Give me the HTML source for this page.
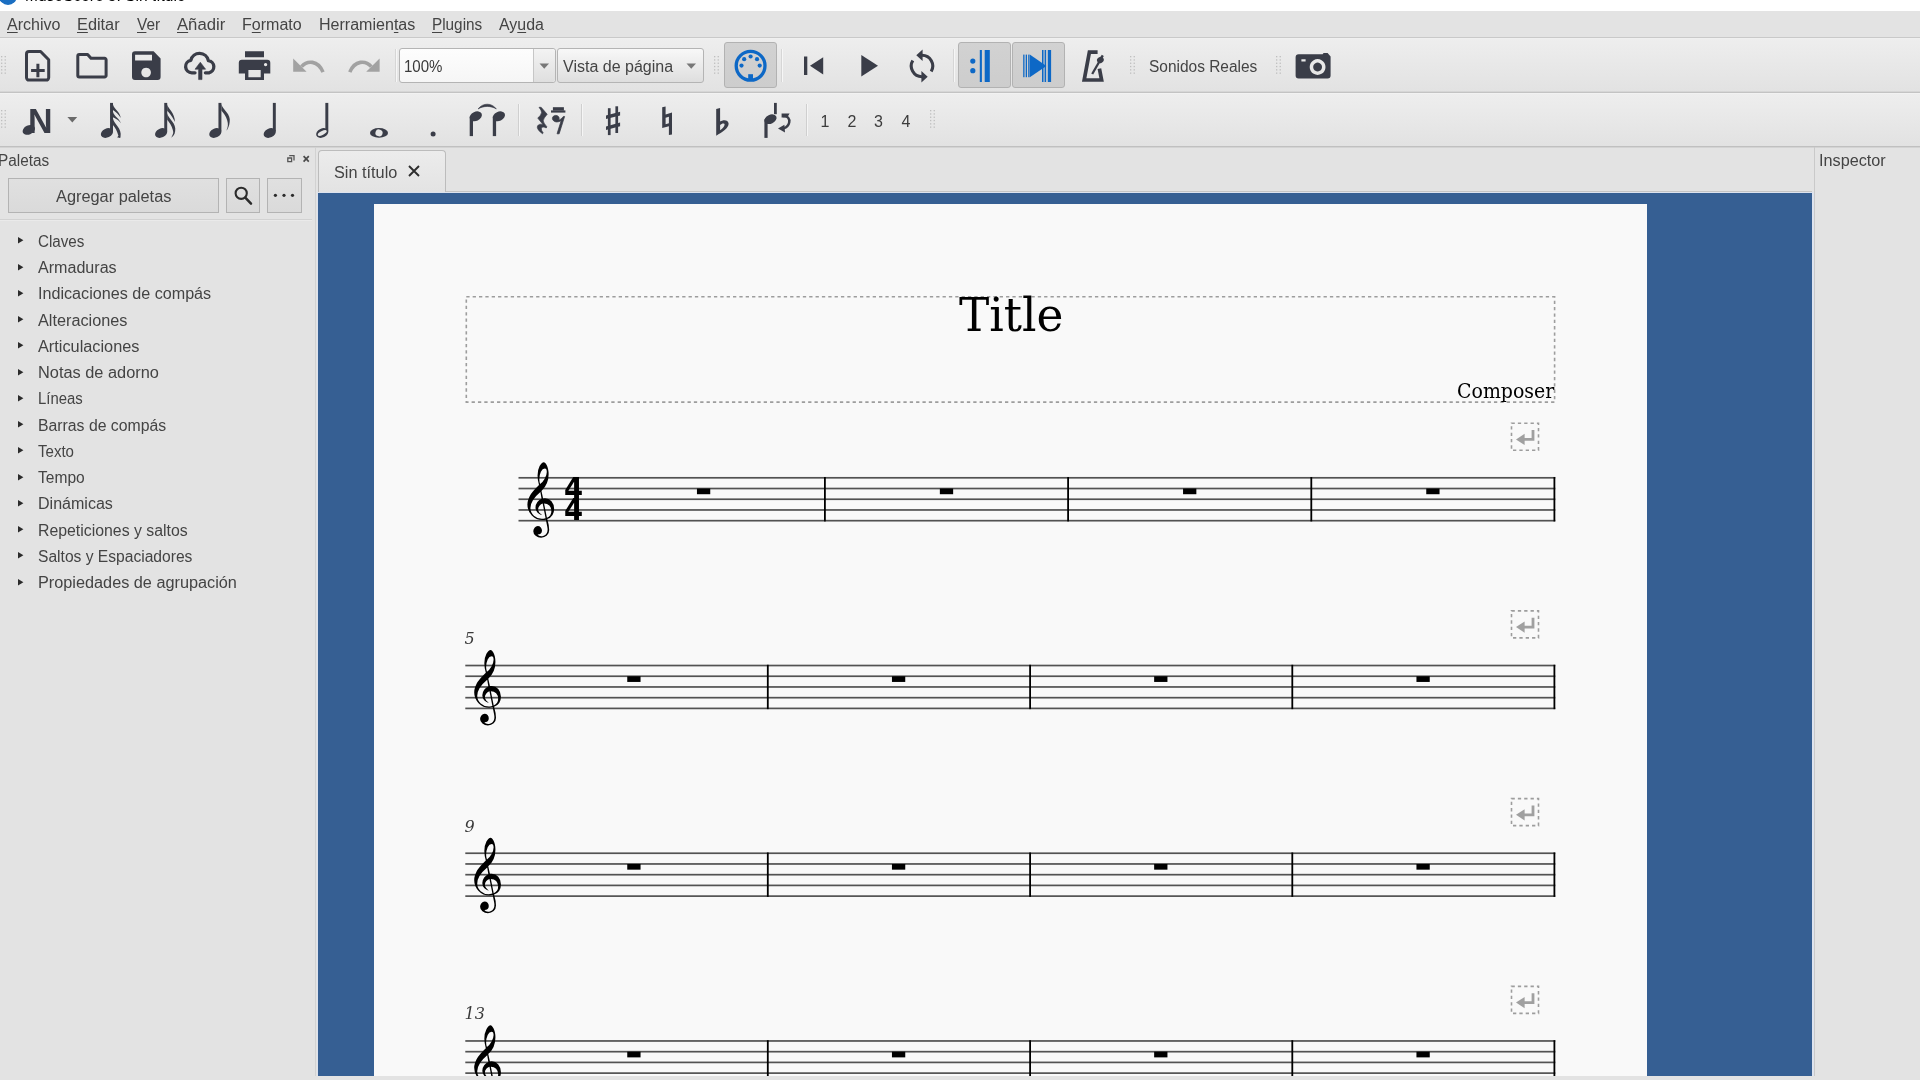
<!DOCTYPE html>
<html lang="es"><head><meta charset="utf-8"><title>MuseScore 3: Sin título</title>
<style>
html,body{margin:0;padding:0;width:1920px;height:1080px;overflow:hidden;background:#e3e3e3}
#r{position:relative;width:1920px;height:1080px;overflow:hidden;will-change:transform}
#r div,#r svg{position:absolute;display:block}
#r div.t{white-space:nowrap}
#r u{text-decoration:underline;text-underline-offset:2.2px;text-decoration-thickness:1.4px}
</style></head>
<body><div id="r">
<div style="left:0px;top:0px;width:1920px;height:1080px;background:#e3e3e3"></div>
<div style="left:0px;top:0px;width:1920px;height:11px;background:#ffffff"></div>
<div style="left:-1px;top:-13px;width:18px;height:18px;border-radius:50%;background:#1b6fc2"></div>
<div class="t" style="left:24.6px;top:-14.44px;font-family:'Liberation Sans',sans-serif;font-size:16px;line-height:20px;color:#000;transform-origin:0 0;transform:scale(0.9703,1);">MuseScore 3: Sin título</div>
<div style="left:0px;top:11px;width:1920px;height:26px;background:#e3e3e3"></div>
<div style="left:0px;top:37px;width:1920px;height:1px;background:#c9c9c9"></div>
<div class="t" style="left:6.8px;top:15.26px;font-family:'Liberation Sans',sans-serif;font-size:16px;line-height:20px;color:#444444;transform-origin:0 0;transform:scale(1.0028,1);"><u>A</u>rchivo</div>
<div class="t" style="left:77.0px;top:15.26px;font-family:'Liberation Sans',sans-serif;font-size:16px;line-height:20px;color:#444444;transform-origin:0 0;transform:scale(1.0192,1);"><u>E</u>ditar</div>
<div class="t" style="left:136.6px;top:15.26px;font-family:'Liberation Sans',sans-serif;font-size:16px;line-height:20px;color:#444444;transform-origin:0 0;transform:scale(0.9599,1);"><u>V</u>er</div>
<div class="t" style="left:176.7px;top:15.26px;font-family:'Liberation Sans',sans-serif;font-size:16px;line-height:20px;color:#444444;transform-origin:0 0;transform:scale(1.0422,1);"><u>A</u>ñadir</div>
<div class="t" style="left:242.4px;top:15.26px;font-family:'Liberation Sans',sans-serif;font-size:16px;line-height:20px;color:#444444;transform-origin:0 0;transform:scale(1.0022,1);">F<u>o</u>rmato</div>
<div class="t" style="left:319.2px;top:15.26px;font-family:'Liberation Sans',sans-serif;font-size:16px;line-height:20px;color:#444444;transform-origin:0 0;transform:scale(1.0028,1);">Herramien<u>t</u>as</div>
<div class="t" style="left:432.0px;top:15.26px;font-family:'Liberation Sans',sans-serif;font-size:16px;line-height:20px;color:#444444;transform-origin:0 0;transform:scale(0.9566,1);"><u>P</u>lugins</div>
<div class="t" style="left:498.5px;top:15.26px;font-family:'Liberation Sans',sans-serif;font-size:16px;line-height:20px;color:#444444;transform-origin:0 0;transform:scale(0.9941,1);">Ay<u>u</u>da</div>
<div style="left:0px;top:38px;width:1920px;height:54px;background:linear-gradient(#eeeeee,#e2e2e2)"></div>
<div style="left:0px;top:38px;width:1920px;height:1px;background:#f0f0f0"></div>
<div style="left:0px;top:91px;width:1920px;height:1px;background:#d6d6d6"></div>
<div style="left:0px;top:92px;width:1920px;height:1px;background:#c3c3c3"></div>
<div style="left:0px;top:93px;width:1920px;height:53px;background:linear-gradient(#eeeeee,#e2e2e2)"></div>
<div style="left:0px;top:93px;width:1920px;height:1px;background:#f2f2f2"></div>
<div style="left:0px;top:146px;width:1920px;height:1px;background:#c0c0c0"></div>
<div style="left:0px;top:147px;width:1920px;height:1px;background:#d3d3d3"></div>
<div class="t" style="left:-1.8px;top:151.36px;font-family:'Liberation Sans',sans-serif;font-size:16px;line-height:20px;color:#444444;transform-origin:0 0;transform:scale(0.9594,1);">Paletas</div>
<div style="left:315px;top:147px;width:1px;height:930px;background:#d2d2d2"></div>
<div style="left:1814px;top:147px;width:1px;height:930px;background:#c9c9c9"></div>
<div style="left:8px;top:178px;width:211px;height:35px;background:linear-gradient(#e0e0e0,#dadada);border:1px solid #b3b3b3;box-sizing:border-box"></div>
<div class="t" style="left:55.9px;top:187.06px;font-family:'Liberation Sans',sans-serif;font-size:16px;line-height:20px;color:#444444;transform-origin:0 0;transform:scale(1.0216,1);">Agregar paletas</div>
<div style="left:226px;top:178px;width:34px;height:35px;background:linear-gradient(#e0e0e0,#dadada);border:1px solid #b3b3b3;box-sizing:border-box"></div>
<div style="left:267px;top:178px;width:35px;height:35px;background:linear-gradient(#e0e0e0,#dadada);border:1px solid #b3b3b3;box-sizing:border-box"></div>
<div style="left:0px;top:219px;width:312px;height:1px;background:#d2d2d2"></div>
<div style="left:0px;top:220px;width:312px;height:1px;background:#eaeaea"></div>
<div class="t" style="left:37.7px;top:231.96px;font-family:'Liberation Sans',sans-serif;font-size:16px;line-height:20px;color:#444444;transform-origin:0 0;transform:scale(0.9488,1);">Claves</div>
<svg style="left:17px;top:236.4px;" width="8" height="9" viewBox="0 0 8 9"><path d="M1 1 L6.4 4.2 L1 7.4 Z" fill="#2b2b2b"/></svg>
<div class="t" style="left:37.7px;top:258.20px;font-family:'Liberation Sans',sans-serif;font-size:16px;line-height:20px;color:#444444;transform-origin:0 0;transform:scale(1.0051,1);">Armaduras</div>
<svg style="left:17px;top:262.64px;" width="8" height="9" viewBox="0 0 8 9"><path d="M1 1 L6.4 4.2 L1 7.4 Z" fill="#2b2b2b"/></svg>
<div class="t" style="left:37.7px;top:284.44px;font-family:'Liberation Sans',sans-serif;font-size:16px;line-height:20px;color:#444444;transform-origin:0 0;transform:scale(1.0087,1);">Indicaciones de compás</div>
<svg style="left:17px;top:288.88px;" width="8" height="9" viewBox="0 0 8 9"><path d="M1 1 L6.4 4.2 L1 7.4 Z" fill="#2b2b2b"/></svg>
<div class="t" style="left:37.7px;top:310.68px;font-family:'Liberation Sans',sans-serif;font-size:16px;line-height:20px;color:#444444;transform-origin:0 0;transform:scale(1.0154,1);">Alteraciones</div>
<svg style="left:17px;top:315.12px;" width="8" height="9" viewBox="0 0 8 9"><path d="M1 1 L6.4 4.2 L1 7.4 Z" fill="#2b2b2b"/></svg>
<div class="t" style="left:37.7px;top:336.92px;font-family:'Liberation Sans',sans-serif;font-size:16px;line-height:20px;color:#444444;transform-origin:0 0;transform:scale(1.0181,1);">Articulaciones</div>
<svg style="left:17px;top:341.36px;" width="8" height="9" viewBox="0 0 8 9"><path d="M1 1 L6.4 4.2 L1 7.4 Z" fill="#2b2b2b"/></svg>
<div class="t" style="left:37.7px;top:363.16px;font-family:'Liberation Sans',sans-serif;font-size:16px;line-height:20px;color:#444444;transform-origin:0 0;transform:scale(1.0219,1);">Notas de adorno</div>
<svg style="left:17px;top:367.59999999999997px;" width="8" height="9" viewBox="0 0 8 9"><path d="M1 1 L6.4 4.2 L1 7.4 Z" fill="#2b2b2b"/></svg>
<div class="t" style="left:37.7px;top:389.40px;font-family:'Liberation Sans',sans-serif;font-size:16px;line-height:20px;color:#444444;transform-origin:0 0;transform:scale(0.9295,1);">Líneas</div>
<svg style="left:17px;top:393.84px;" width="8" height="9" viewBox="0 0 8 9"><path d="M1 1 L6.4 4.2 L1 7.4 Z" fill="#2b2b2b"/></svg>
<div class="t" style="left:37.7px;top:415.64px;font-family:'Liberation Sans',sans-serif;font-size:16px;line-height:20px;color:#444444;transform-origin:0 0;transform:scale(0.987,1);">Barras de compás</div>
<svg style="left:17px;top:420.08px;" width="8" height="9" viewBox="0 0 8 9"><path d="M1 1 L6.4 4.2 L1 7.4 Z" fill="#2b2b2b"/></svg>
<div class="t" style="left:37.7px;top:441.88px;font-family:'Liberation Sans',sans-serif;font-size:16px;line-height:20px;color:#444444;transform-origin:0 0;transform:scale(0.9409,1);">Texto</div>
<svg style="left:17px;top:446.32px;" width="8" height="9" viewBox="0 0 8 9"><path d="M1 1 L6.4 4.2 L1 7.4 Z" fill="#2b2b2b"/></svg>
<div class="t" style="left:37.7px;top:468.12px;font-family:'Liberation Sans',sans-serif;font-size:16px;line-height:20px;color:#444444;transform-origin:0 0;transform:scale(0.9719,1);">Tempo</div>
<svg style="left:17px;top:472.56px;" width="8" height="9" viewBox="0 0 8 9"><path d="M1 1 L6.4 4.2 L1 7.4 Z" fill="#2b2b2b"/></svg>
<div class="t" style="left:37.7px;top:494.36px;font-family:'Liberation Sans',sans-serif;font-size:16px;line-height:20px;color:#444444;transform-origin:0 0;transform:scale(1.0028,1);">Dinámicas</div>
<svg style="left:17px;top:498.8px;" width="8" height="9" viewBox="0 0 8 9"><path d="M1 1 L6.4 4.2 L1 7.4 Z" fill="#2b2b2b"/></svg>
<div class="t" style="left:37.7px;top:520.60px;font-family:'Liberation Sans',sans-serif;font-size:16px;line-height:20px;color:#444444;transform-origin:0 0;transform:scale(0.9898,1);">Repeticiones y saltos</div>
<svg style="left:17px;top:525.04px;" width="8" height="9" viewBox="0 0 8 9"><path d="M1 1 L6.4 4.2 L1 7.4 Z" fill="#2b2b2b"/></svg>
<div class="t" style="left:37.7px;top:546.84px;font-family:'Liberation Sans',sans-serif;font-size:16px;line-height:20px;color:#444444;transform-origin:0 0;transform:scale(0.9753,1);">Saltos y Espaciadores</div>
<svg style="left:17px;top:551.28px;" width="8" height="9" viewBox="0 0 8 9"><path d="M1 1 L6.4 4.2 L1 7.4 Z" fill="#2b2b2b"/></svg>
<div class="t" style="left:37.7px;top:573.08px;font-family:'Liberation Sans',sans-serif;font-size:16px;line-height:20px;color:#444444;transform-origin:0 0;transform:scale(1.0163,1);">Propiedades de agrupación</div>
<svg style="left:17px;top:577.52px;" width="8" height="9" viewBox="0 0 8 9"><path d="M1 1 L6.4 4.2 L1 7.4 Z" fill="#2b2b2b"/></svg>
<div class="t" style="left:1818.6px;top:151.36px;font-family:'Liberation Sans',sans-serif;font-size:16px;line-height:20px;color:#444444;transform-origin:0 0;transform:scale(1.0135,1);">Inspector</div>
<div style="left:318px;top:191px;width:1494px;height:1px;background:#c4c4c4"></div>
<div style="left:318px;top:150px;width:128px;height:42px;background:linear-gradient(#ececec,#e3e3e3);border:1px solid #bcbcbc;border-bottom:none;border-radius:4px 4px 0 0;box-sizing:border-box"></div>
<div class="t" style="left:333.9px;top:163.16px;font-family:'Liberation Sans',sans-serif;font-size:16px;line-height:20px;color:#444444;transform-origin:0 0;transform:scale(1.0167,1);">Sin título</div>
<svg style="left:407px;top:164px;" width="14" height="14" viewBox="0 0 14 14"><path d="M2 2 L12 12 M12 2 L2 12" stroke="#2e2e2e" stroke-width="1.9" fill="none"/></svg>
<div style="left:316.5px;top:192px;width:1497px;height:885px;background:#dde3ee"></div>
<div style="left:318px;top:193px;width:1494px;height:883px;background:#365f93"></div>
<div style="left:374px;top:204px;width:1272.5px;height:872.5px;background:#f9f9f9"></div>
<div style="left:0px;top:1076px;width:1920px;height:4px;background:#e3e3e3"></div>
<svg style="left:286px;top:153px;" width="26" height="11" viewBox="0 0 26 11"><path d="M3.2 2.6 H8 V7.4 M5.6 5 H1.8 V8.6 H5.6 Z" stroke="#555" stroke-width="1.3" fill="none"/><path d="M17.6 3.2 L22.8 8.6 M22.8 3.2 L17.6 8.6" stroke="#4a4a4a" stroke-width="1.7" fill="none"/></svg>
<svg style="left:226px;top:178px;" width="76" height="35" viewBox="0 0 76 35"><circle cx="15.2" cy="15.3" r="5.6" stroke="#2b2b2b" stroke-width="2.1" fill="none"/><path d="M19.3 19.6 L25 25.6" stroke="#2b2b2b" stroke-width="2.5" stroke-linecap="round"/><circle cx="49.4" cy="17.3" r="1.6" fill="#2b2b2b"/><circle cx="58" cy="17.3" r="1.6" fill="#2b2b2b"/><circle cx="66.5" cy="17.3" r="1.6" fill="#2b2b2b"/></svg>
<svg style="left:1.2px;top:55.5px;" width="6" height="20.799999999999997" viewBox="0 0 6 20.799999999999997"><g fill="#bebebe"><rect x="0" y="0.00" width="1.3" height="1.3"/><rect x="3.6" y="0.00" width="1.3" height="1.3"/><rect x="0" y="3.30" width="1.3" height="1.3"/><rect x="3.6" y="3.30" width="1.3" height="1.3"/><rect x="0" y="6.60" width="1.3" height="1.3"/><rect x="3.6" y="6.60" width="1.3" height="1.3"/><rect x="0" y="9.90" width="1.3" height="1.3"/><rect x="3.6" y="9.90" width="1.3" height="1.3"/><rect x="0" y="13.20" width="1.3" height="1.3"/><rect x="3.6" y="13.20" width="1.3" height="1.3"/><rect x="0" y="16.50" width="1.3" height="1.3"/><rect x="3.6" y="16.50" width="1.3" height="1.3"/></g></svg>
<svg style="left:0px;top:0px;" width="1920" height="92" viewBox="0 0 1920 92"><path d="M29 51.5 H40.6 L48.7 59.8 V77.6 a2.5 2.5 0 0 1 -2.5 2.5 H29 a2.5 2.5 0 0 1 -2.5 -2.5 V54 a2.5 2.5 0 0 1 2.5 -2.5 Z" stroke="#3a3d48" fill="none" stroke-width="3" stroke-linejoin="round" stroke-linecap="round"/><path d="M32.6 70.5 H43.2 M37.9 65.2 V75.8" stroke="#3a3d48" stroke-width="3" fill="none" stroke-linecap="square"/><path d="M79.3 54.4 H87.6 L91 58.3 H104.6 a1.5 1.5 0 0 1 1.5 1.5 V75.5 a1.5 1.5 0 0 1 -1.5 1.5 H79.3 a1.5 1.5 0 0 1 -1.5 -1.5 V55.9 a1.5 1.5 0 0 1 1.5 -1.5 Z" stroke="#3a3d48" fill="none" stroke-width="3" stroke-linejoin="round" stroke-linecap="round"/><path fill-rule="evenodd" fill="#3a3d48" d="M135 51.3 H153.6 L160.6 58.4 V77 a3 3 0 0 1 -3 3 H135 a3 3 0 0 1 -3 -3 V54.3 a3 3 0 0 1 3 -3 Z M135.1 54.8 V60.4 H152 V54.8 Z M146.1 67.7 a4.8 4.8 0 1 0 0.01 0 Z"/><path d="M195 72.8 H191.8 a6.3 6.3 0 0 1 -1 -12.5 a9 9 0 0 1 17.6 0.3 a6.2 6.2 0 0 1 0.6 12.2 H205.4" stroke="#3a3d48" fill="none" stroke-width="3.3" stroke-linejoin="round" stroke-linecap="round"/><path d="M200.3 62.2 L205.6 69.2 H202 V79.6 H198.6 V69.2 H195 Z" fill="#3a3d48" stroke="#3a3d48" stroke-width="0.6" stroke-linejoin="round"/><path fill-rule="evenodd" fill="#3a3d48" d="M245 51.3 H264 V57.3 H245 Z M241.8 59.7 H267.3 a3 3 0 0 1 3 3 V73.5 H264 V80 H245 V73.5 H238.8 V62.7 a3 3 0 0 1 3 -3 Z M248.4 69.9 V77.2 H260.7 V69.9 Z M265.6 63 a1.6 1.6 0 1 0 0.01 0 Z"/><path d="M293.2 58.4 L306.6 71.8 H293.2 Z" fill="#a2a2a2"/><path d="M301.5 66.6 C307 60.2 318 59.8 323 72.2" stroke="#a2a2a2" stroke-width="3.6" fill="none"/><path d="M379.6 58.4 L366.2 71.8 H379.6 Z" fill="#a2a2a2"/><path d="M371.3 66.6 C365.8 60.2 354.8 59.8 349.8 72.2" stroke="#a2a2a2" stroke-width="3.6" fill="none"/><path d="M804 56.6 H807.3 V75 H804 Z M810 65.8 L823.2 57.3 V74.4 Z" fill="#3a3d48"/><path d="M861.3 55 L878 65.8 L861.3 76.6 Z" fill="#3a3d48"/><path d="M922 55.3 a10.7 10.7 0 0 1 9.2 16.2 M922 76.7 a10.7 10.7 0 0 1 -9.2 -16.2" stroke="#3a3d48" stroke-width="3.1" fill="none"/><path d="M922.6 49.4 L916.3 55.2 L922.6 61 Z M921.4 71 L927.7 76.8 L921.4 82.6 Z" fill="#3a3d48"/><path d="M1097.6 52.2 H1089.4 L1084.2 80 H1101.6 L1099.4 68.6" stroke="#3a3d48" stroke-width="3.7" fill="none" stroke-linejoin="miter"/><path d="M1092.2 74 L1099.4 61.5" stroke="#3a3d48" stroke-width="2.3" fill="none"/><ellipse cx="1100.4" cy="60" rx="3.5" ry="3" transform="rotate(-35 1100.4 60)" fill="#3a3d48"/><path d="M1100.6 59 L1102.8 55.4" stroke="#3a3d48" stroke-width="2.4"/><path fill-rule="evenodd" fill="#3a3d48" d="M1298.6 54.3 H1322.6 L1323.6 52.9 H1327.6 L1330.6 56.5 V75.5 a3 3 0 0 1 -3 3 H1298.6 a3 3 0 0 1 -3 -3 V57.3 a3 3 0 0 1 3 -3 Z M1317.6 59.1 a7.9 7.9 0 1 0 0.01 0 Z M1317.6 62.6 a4.4 4.4 0 1 1 -0.01 0 Z M1301.4 59.2 V61.5 H1305.6 V59.2 Z"/></svg>
<div style="left:395px;top:49px;width:1px;height:33px;background:#d6d6d6"></div>
<div style="left:396px;top:49px;width:1px;height:33px;background:#f6f6f6"></div>
<div style="left:781px;top:49px;width:1px;height:33px;background:#d6d6d6"></div>
<div style="left:782px;top:49px;width:1px;height:33px;background:#f6f6f6"></div>
<div style="left:953px;top:49px;width:1px;height:33px;background:#d6d6d6"></div>
<div style="left:954px;top:49px;width:1px;height:33px;background:#f6f6f6"></div>
<div style="left:399px;top:48px;width:157px;height:35px;background:linear-gradient(#fdfdfd,#f6f6f6);border:1px solid #b4b4b4;border-radius:3px;box-sizing:border-box"></div>
<div style="left:533px;top:49px;width:22px;height:33px;background:linear-gradient(#f3f3f3,#dfdfdf);border-left:1px solid #c6c6c6;border-radius:0 3px 3px 0;box-sizing:border-box"></div>
<div class="t" style="left:403.8px;top:57.16px;font-family:'Liberation Sans',sans-serif;font-size:16px;line-height:20px;color:#3a3a3a;transform-origin:0 0;transform:scale(0.9408,1);">100%</div>
<svg style="left:539px;top:62.5px;" width="11" height="7" viewBox="0 0 11 7"><path d="M0.5 0.5 H10 L5.25 5.8 Z" fill="#777"/></svg>
<div style="left:557px;top:48px;width:147px;height:35px;background:linear-gradient(#f8f8f8,#dedede);border:1px solid #b4b4b4;border-radius:3px;box-sizing:border-box"></div>
<div class="t" style="left:562.5px;top:57.16px;font-family:'Liberation Sans',sans-serif;font-size:16px;line-height:20px;color:#444444;transform-origin:0 0;transform:scale(1.0009,1);">Vista de página</div>
<svg style="left:686.3px;top:62.5px;" width="11" height="7" viewBox="0 0 11 7"><path d="M0.5 0.5 H10 L5.25 5.8 Z" fill="#777"/></svg>
<svg style="left:713.7px;top:55.5px;" width="6" height="20.799999999999997" viewBox="0 0 6 20.799999999999997"><g fill="#bebebe"><rect x="0" y="0.00" width="1.3" height="1.3"/><rect x="3.6" y="0.00" width="1.3" height="1.3"/><rect x="0" y="3.30" width="1.3" height="1.3"/><rect x="3.6" y="3.30" width="1.3" height="1.3"/><rect x="0" y="6.60" width="1.3" height="1.3"/><rect x="3.6" y="6.60" width="1.3" height="1.3"/><rect x="0" y="9.90" width="1.3" height="1.3"/><rect x="3.6" y="9.90" width="1.3" height="1.3"/><rect x="0" y="13.20" width="1.3" height="1.3"/><rect x="3.6" y="13.20" width="1.3" height="1.3"/><rect x="0" y="16.50" width="1.3" height="1.3"/><rect x="3.6" y="16.50" width="1.3" height="1.3"/></g></svg>
<div style="left:724px;top:42px;width:53px;height:46px;background:linear-gradient(#d2d2d2,#cdcdcd);border:1px solid #b2b2b2;border-radius:3px;box-sizing:border-box"></div>
<div style="left:958px;top:42px;width:53px;height:46px;background:linear-gradient(#d2d2d2,#cdcdcd);border:1px solid #b2b2b2;border-radius:3px;box-sizing:border-box"></div>
<div style="left:1012px;top:42px;width:53px;height:46px;background:linear-gradient(#d2d2d2,#cdcdcd);border:1px solid #b2b2b2;border-radius:3px;box-sizing:border-box"></div>
<svg style="left:0px;top:0px;" width="1920" height="92" viewBox="0 0 1920 92"><circle cx="750.6" cy="65.8" r="14.4" stroke="#0d68c6" stroke-width="3.3" fill="none"/><circle cx="741.50" cy="65.60" r="2.1" fill="#0d68c6"/><circle cx="744.17" cy="59.17" r="2.1" fill="#0d68c6"/><circle cx="750.60" cy="56.50" r="2.1" fill="#0d68c6"/><circle cx="757.03" cy="59.17" r="2.1" fill="#0d68c6"/><circle cx="759.70" cy="65.60" r="2.1" fill="#0d68c6"/><rect x="748.2" y="74.2" width="4.8" height="5.2" fill="#0d68c6"/><circle cx="972.8" cy="61.1" r="2.6" fill="#0d68c6"/><circle cx="972.8" cy="70.7" r="2.6" fill="#0d68c6"/><rect x="979.8" y="50" width="2.1" height="32" fill="#0d68c6"/><rect x="984.7" y="50" width="5.1" height="32" fill="#0d68c6"/><rect x="1023.2" y="54.6" width="1.3" height="22.6" fill="#0d68c6"/><rect x="1025.7" y="54.6" width="1.3" height="22.6" fill="#0d68c6"/><rect x="1028.2" y="54.6" width="1.3" height="22.6" fill="#0d68c6"/><path d="M1029.8 54.6 L1046.4 65.9 L1029.8 77.2 Z" fill="#0d68c6"/><rect x="1042" y="50" width="1.5" height="32" fill="#0d68c6"/><rect x="1044.6" y="50" width="1.5" height="32" fill="#0d68c6"/><rect x="1047.8" y="50" width="3.3" height="32" fill="#0d68c6"/></svg>
<svg style="left:1130.2px;top:55.5px;" width="6" height="20.799999999999997" viewBox="0 0 6 20.799999999999997"><g fill="#bebebe"><rect x="0" y="0.00" width="1.3" height="1.3"/><rect x="3.6" y="0.00" width="1.3" height="1.3"/><rect x="0" y="3.30" width="1.3" height="1.3"/><rect x="3.6" y="3.30" width="1.3" height="1.3"/><rect x="0" y="6.60" width="1.3" height="1.3"/><rect x="3.6" y="6.60" width="1.3" height="1.3"/><rect x="0" y="9.90" width="1.3" height="1.3"/><rect x="3.6" y="9.90" width="1.3" height="1.3"/><rect x="0" y="13.20" width="1.3" height="1.3"/><rect x="3.6" y="13.20" width="1.3" height="1.3"/><rect x="0" y="16.50" width="1.3" height="1.3"/><rect x="3.6" y="16.50" width="1.3" height="1.3"/></g></svg>
<div class="t" style="left:1148.8px;top:57.26px;font-family:'Liberation Sans',sans-serif;font-size:16px;line-height:20px;color:#444444;transform-origin:0 0;transform:scale(0.9664,1);">Sonidos Reales</div>
<svg style="left:1275.8px;top:55.5px;" width="6" height="20.799999999999997" viewBox="0 0 6 20.799999999999997"><g fill="#bebebe"><rect x="0" y="0.00" width="1.3" height="1.3"/><rect x="3.6" y="0.00" width="1.3" height="1.3"/><rect x="0" y="3.30" width="1.3" height="1.3"/><rect x="3.6" y="3.30" width="1.3" height="1.3"/><rect x="0" y="6.60" width="1.3" height="1.3"/><rect x="3.6" y="6.60" width="1.3" height="1.3"/><rect x="0" y="9.90" width="1.3" height="1.3"/><rect x="3.6" y="9.90" width="1.3" height="1.3"/><rect x="0" y="13.20" width="1.3" height="1.3"/><rect x="3.6" y="13.20" width="1.3" height="1.3"/><rect x="0" y="16.50" width="1.3" height="1.3"/><rect x="3.6" y="16.50" width="1.3" height="1.3"/></g></svg>
<svg style="left:1.2px;top:110px;" width="6" height="20.799999999999997" viewBox="0 0 6 20.799999999999997"><g fill="#bebebe"><rect x="0" y="0.00" width="1.3" height="1.3"/><rect x="3.6" y="0.00" width="1.3" height="1.3"/><rect x="0" y="3.30" width="1.3" height="1.3"/><rect x="3.6" y="3.30" width="1.3" height="1.3"/><rect x="0" y="6.60" width="1.3" height="1.3"/><rect x="3.6" y="6.60" width="1.3" height="1.3"/><rect x="0" y="9.90" width="1.3" height="1.3"/><rect x="3.6" y="9.90" width="1.3" height="1.3"/><rect x="0" y="13.20" width="1.3" height="1.3"/><rect x="3.6" y="13.20" width="1.3" height="1.3"/><rect x="0" y="16.50" width="1.3" height="1.3"/><rect x="3.6" y="16.50" width="1.3" height="1.3"/></g></svg>
<div style="left:518px;top:104px;width:1px;height:32px;background:#cfcfcf"></div>
<div style="left:519px;top:104px;width:1px;height:32px;background:#f5f5f5"></div>
<div style="left:581px;top:104px;width:1px;height:32px;background:#cfcfcf"></div>
<div style="left:582px;top:104px;width:1px;height:32px;background:#f5f5f5"></div>
<svg style="left:0px;top:0px;" width="1920" height="147" viewBox="0 0 1920 147"><ellipse cx="28.8" cy="129.9" rx="6.5" ry="4.5" transform="rotate(-25 28.8 129.9)" fill="#3a3d48"/><path d="M67.4 117 H77.2 L72.3 122.4 Z" fill="#6a6a6a"/><rect x="110.05" y="102.9" width="2.95" height="28.40" fill="#3a3d48"/><ellipse cx="106.95" cy="133.0" rx="6.4" ry="4.5" transform="rotate(-25 106.95 133.0)" fill="#3a3d48"/><path d="M112.95000000000002 104.4 C114.15000000000002 109.0 120.15000000000002 112.0 120.75000000000001 118.0 C118.75000000000001 114.4 115.55000000000001 111.5 112.95000000000002 109.9 Z" fill="#3a3d48"/><path d="M112.95000000000002 111.8 C114.15000000000002 116.39999999999999 120.15000000000002 119.39999999999999 120.75000000000001 123.3 C118.75000000000001 119.7 115.55000000000001 118.89999999999999 112.95000000000002 117.3 Z" fill="#3a3d48"/><path d="M112.95000000000002 118.4 C114.35000000000002 124.4 122.15 128.4 120.55000000000001 136.4 C120.25000000000001 139.9 118.75000000000001 136.20000000000002 117.15000000000002 137.8 C118.95000000000002 133.8 119.15 138.4 118.15 135.0 C116.95000000000002 130.4 115.45000000000002 128.20000000000002 112.95000000000002 124.9 Z" fill="#3a3d48"/><rect x="164.25" y="102.9" width="2.95" height="28.40" fill="#3a3d48"/><ellipse cx="161.15" cy="133.0" rx="6.4" ry="4.5" transform="rotate(-25 161.15 133.0)" fill="#3a3d48"/><path d="M167.15 104.4 C168.35 109.0 174.45000000000002 112.0 175.05 121.9 C173.05 118.30000000000001 169.75 112.5 167.15 110.9 Z" fill="#3a3d48"/><path d="M167.15 113.2 C168.55 119.2 176.75 123.2 175.15 131.2 C174.85 134.7 172.95 136.1 171.35 137.7 C173.15 133.7 173.75 133.2 172.75 129.8 C171.55 125.2 169.65 123.0 167.15 119.7 Z" fill="#3a3d48"/><rect x="218.45" y="102.9" width="2.95" height="28.40" fill="#3a3d48"/><ellipse cx="215.35000000000002" cy="133.0" rx="6.4" ry="4.5" transform="rotate(-25 215.35000000000002 133.0)" fill="#3a3d48"/><path d="M221.35000000000002 104.0 C222.75000000000003 110.0 231.25000000000003 114.0 229.65000000000003 122.0 C229.35000000000002 125.5 227.95000000000002 129.20000000000002 226.35000000000002 130.8 C228.15000000000003 126.80000000000001 228.25000000000003 124.0 227.25000000000003 120.6 C226.05000000000004 116.0 223.85000000000002 113.8 221.35000000000002 110.5 Z" fill="#3a3d48"/><rect x="272.85" y="102.9" width="2.95" height="28.40" fill="#3a3d48"/><ellipse cx="269.75" cy="133.0" rx="6.4" ry="4.5" transform="rotate(-25 269.75 133.0)" fill="#3a3d48"/><rect x="325.35" y="102.9" width="2.95" height="28.40" fill="#3a3d48"/><ellipse cx="322.25" cy="133.0" rx="6.4" ry="4.5" transform="rotate(-25 322.25 133.0)" fill="#3a3d48"/><ellipse cx="322.25" cy="133.0" rx="4.9" ry="1.9" transform="rotate(-27 322.25 133.0)" fill="#e6e6e6"/><ellipse cx="379" cy="132.9" rx="9" ry="4.9" fill="#3a3d48"/><ellipse cx="379" cy="132.9" rx="3.6" ry="3.4" transform="rotate(20 379 132.9)" fill="#e6e6e6"/><circle cx="433.1" cy="134" r="2.5" fill="#3a3d48"/><ellipse cx="475.8" cy="116.3" rx="6.4" ry="4.6" transform="rotate(-25 475.8 116.3)" fill="#3a3d48"/><rect x="469.7" y="116.5" width="3.3" height="19.6" fill="#3a3d48"/><ellipse cx="498.9" cy="116.3" rx="6.4" ry="4.6" transform="rotate(-25 498.9 116.3)" fill="#3a3d48"/><rect x="492.8" y="116.5" width="3.3" height="19.6" fill="#3a3d48"/><path d="M478.1 109 C482.5 102.6 492 102.6 496.3 109 C491.5 105.6 483 105.6 478.1 109 Z" fill="#3a3d48" stroke="#3a3d48" stroke-width="0.6"/><path transform="translate(534.69 136.56) scale(0.04737 -0.04446)" d="M55 208Q55 242 77.5 260.0Q100 278 130 278Q150 278 178 267L65 415Q145 487 145 544Q145 589 91 658H136L264 502Q181 404 181 356Q181 310 259 217L243 194Q203 217 176 217Q140 217 140.0 173.0Q140 129 179 84L165 62Q55 144 55 208Z" fill="#3a3d48" stroke="#3a3d48" stroke-width="14.8" stroke-linejoin="round"/><rect x="552.9" y="107.2" width="11" height="3.4" fill="#3a3d48"/><rect x="551" y="110.4" width="14.4" height="2.2" fill="#3a3d48"/><path transform="translate(551.32 142.15) scale(0.05674 -0.05027)" d="M136 443Q152 443 175.0 466.5Q198 490 213 511H234L138 166H101L173 426Q126 402 97.0 402.0Q68 402 43.5 422.5Q19 443 19 473Q19 495 35.0 513.5Q51 532 79 532Q106 532 122.0 513.5Q138 495 138 473Q138 458 131 445Q135 443 136 443Z" fill="#3a3d48" stroke="#3a3d48" stroke-width="14.1" stroke-linejoin="round"/><rect x="607.9" y="108.2" width="2.7" height="26.9" fill="#3a3d48"/><rect x="615.4" y="106.3" width="2.7" height="26.7" fill="#3a3d48"/><path d="M606 115.5 L620.1 111.8 V115.4 L606 119.1 Z M606 126.4 L620.1 122.6 V126.2 L606 130 Z" fill="#3a3d48"/><path fill-rule="evenodd" fill="#3a3d48" d="M662.2 107.2 L665.6 106.5 V114.6 L672 112.5 V134.4 L668.9 135.1 V126.3 L662.2 128.1 Z M665.6 117.8 V124.2 L668.9 123.2 V116.8 Z"/><path fill-rule="evenodd" fill="#3a3d48" d="M716.2 108.9 L720.1 108.1 V121.6 C722.8 119.4 728.4 119.4 728.6 123.6 C728.8 128.2 722.2 132.4 716.2 135.7 Z M720.1 125 V130.2 C722.4 128.6 724.6 126.5 724.6 124.5 C724.6 122.9 721.8 123.1 720.1 125 Z"/><ellipse cx="770.5" cy="119.2" rx="6.4" ry="4.4" transform="rotate(-25 770.5 119.2)" fill="#3a3d48"/><rect x="764.4" y="119.2" width="3.2" height="18.7" fill="#3a3d48"/><rect x="774" y="102.9" width="2.8" height="11.3" fill="#3a3d48"/><path d="M783.2 116.2 C787.6 115.4 790 119.2 789.2 122.4 C788.6 125.2 786.4 127.4 783.6 128.2" stroke="#3a3d48" stroke-width="2.5" fill="none"/><path d="M781.6 113.4 H789.6 L787.2 117.4 H781.6 Z M778 128.6 L784.4 124.8 L785 132.4 Z" fill="#3a3d48"/></svg>
<div style="left:806px;top:104px;width:1px;height:32px;background:#cfcfcf"></div>
<div style="left:807px;top:104px;width:1px;height:32px;background:#f5f5f5"></div>
<div class="t" style="left:820.55px;top:111.66px;font-family:'Liberation Sans',sans-serif;font-size:16px;line-height:20px;color:#3c3c3c;">1</div>
<div class="t" style="left:847.4499999999999px;top:111.66px;font-family:'Liberation Sans',sans-serif;font-size:16px;line-height:20px;color:#3c3c3c;">2</div>
<div class="t" style="left:874.05px;top:111.66px;font-family:'Liberation Sans',sans-serif;font-size:16px;line-height:20px;color:#3c3c3c;">3</div>
<div class="t" style="left:901.55px;top:111.66px;font-family:'Liberation Sans',sans-serif;font-size:16px;line-height:20px;color:#3c3c3c;">4</div>
<svg style="left:929.6px;top:110px;" width="6" height="20.799999999999997" viewBox="0 0 6 20.799999999999997"><g fill="#bebebe"><rect x="0" y="0.00" width="1.3" height="1.3"/><rect x="3.6" y="0.00" width="1.3" height="1.3"/><rect x="0" y="3.30" width="1.3" height="1.3"/><rect x="3.6" y="3.30" width="1.3" height="1.3"/><rect x="0" y="6.60" width="1.3" height="1.3"/><rect x="3.6" y="6.60" width="1.3" height="1.3"/><rect x="0" y="9.90" width="1.3" height="1.3"/><rect x="3.6" y="9.90" width="1.3" height="1.3"/><rect x="0" y="13.20" width="1.3" height="1.3"/><rect x="3.6" y="13.20" width="1.3" height="1.3"/><rect x="0" y="16.50" width="1.3" height="1.3"/><rect x="3.6" y="16.50" width="1.3" height="1.3"/></g></svg>
<div class="t" style="left:27.5px;top:98.75px;font-family:'Liberation Sans',sans-serif;font-size:35.5px;line-height:44px;color:#3a3d48;transform-origin:0 0;transform:scale(0.957,1);font-weight:bold;">N</div>
<svg style="left:0px;top:0px;" width="1920" height="1076" viewBox="0 0 1920 1076"><rect x="466.3" y="296.8" width="1088.3" height="105.3" fill="none" stroke="#9d9d9d" stroke-width="1.6" stroke-dasharray="3.3 3.05"/><rect x="518.5" y="476.95" width="1036.80" height="1.7" fill="#525252"/><rect x="518.5" y="487.67" width="1036.80" height="1.7" fill="#525252"/><rect x="518.5" y="498.39" width="1036.80" height="1.7" fill="#525252"/><rect x="518.5" y="509.11" width="1036.80" height="1.7" fill="#525252"/><rect x="518.5" y="519.83" width="1036.80" height="1.7" fill="#525252"/><rect x="824.00" y="477.05" width="1.8" height="44.38" fill="#000"/><rect x="1067.20" y="477.05" width="1.8" height="44.38" fill="#000"/><rect x="1310.40" y="477.05" width="1.8" height="44.38" fill="#000"/><rect x="1553.50" y="477.05" width="1.8" height="44.38" fill="#000"/><rect x="696.95" y="488.52" width="13.3" height="5.7" fill="#000"/><rect x="939.85" y="488.52" width="13.3" height="5.7" fill="#000"/><rect x="1183.05" y="488.52" width="13.3" height="5.7" fill="#000"/><rect x="1426.25" y="488.52" width="13.3" height="5.7" fill="#000"/><path transform="translate(519.79 519.25) scale(0.06339 -0.06339)" d="M434 2Q464 -103 464 -170Q464 -223 427.0 -257.0Q390 -291 337 -291Q287 -291 250.0 -261.5Q213 -232 213 -190Q213 -160 233.5 -133.5Q254 -107 283.5 -107.0Q313 -107 331.5 -128.5Q350 -150 350 -178Q350 -240 280 -240Q298 -268 338 -268Q353 -268 368.5 -263.5Q384 -259 401.0 -248.0Q418 -237 428.5 -213.5Q439 -190 439 -157Q439 -136 411 -6Q389 -12 356 -12Q259 -12 189.5 60.0Q120 132 120 232Q120 267 131.5 303.0Q143 339 157.5 366.5Q172 394 200.5 428.5Q229 463 248.5 483.5Q268 504 303 539Q280 621 280 689Q280 779 313.0 839.5Q346 900 379 900Q389 900 401.5 887.0Q414 874 426.0 851.0Q438 828 446.5 790.5Q455 753 455 710Q455 551 342 447L368 329Q384 332 397 332Q458 332 500.0 282.5Q542 233 542 162Q542 44 434 2ZM426 746Q426 801 394 801Q358 801 333.0 748.0Q308 695 308 630Q308 588 321 557Q359 580 392.5 639.5Q426 699 426 746ZM498 128Q498 183 466.0 216.0Q434 249 383 249L428 23Q498 52 498 128ZM407 17 361 247Q334 241 311.5 214.0Q289 187 289 158Q289 143 295.0 128.5Q301 114 309.5 104.0Q318 94 327.0 86.0Q336 78 342.0 74.5Q348 71 348 71L340 66Q307 75 277.5 106.0Q248 137 248 184Q248 231 277.5 270.5Q307 310 343 323L325 430Q168 299 168 177Q168 104 223.0 55.0Q278 6 348 6Q365 6 407 17Z" fill="#000"/><rect x="1511.5" y="423.20" width="27" height="27" fill="none" stroke="#9d9d9d" stroke-width="1.6" stroke-dasharray="3.3 3.05"/><path d="M1533 430.00 V439.40 H1523.5" stroke="#a0a0a0" stroke-width="2.8" fill="none"/><path d="M1516 439.40 L1524.6 433.80 V445.00 Z" fill="#a0a0a0"/><rect x="465.3" y="664.67" width="1090.00" height="1.7" fill="#525252"/><rect x="465.3" y="675.39" width="1090.00" height="1.7" fill="#525252"/><rect x="465.3" y="686.11" width="1090.00" height="1.7" fill="#525252"/><rect x="465.3" y="696.83" width="1090.00" height="1.7" fill="#525252"/><rect x="465.3" y="707.55" width="1090.00" height="1.7" fill="#525252"/><rect x="766.90" y="664.77" width="1.8" height="44.38" fill="#000"/><rect x="1029.20" y="664.77" width="1.8" height="44.38" fill="#000"/><rect x="1291.40" y="664.77" width="1.8" height="44.38" fill="#000"/><rect x="1553.50" y="664.77" width="1.8" height="44.38" fill="#000"/><rect x="627.25" y="676.24" width="13.3" height="5.7" fill="#000"/><rect x="891.95" y="676.24" width="13.3" height="5.7" fill="#000"/><rect x="1154.15" y="676.24" width="13.3" height="5.7" fill="#000"/><rect x="1416.45" y="676.24" width="13.3" height="5.7" fill="#000"/><path transform="translate(466.59 706.97) scale(0.06339 -0.06339)" d="M434 2Q464 -103 464 -170Q464 -223 427.0 -257.0Q390 -291 337 -291Q287 -291 250.0 -261.5Q213 -232 213 -190Q213 -160 233.5 -133.5Q254 -107 283.5 -107.0Q313 -107 331.5 -128.5Q350 -150 350 -178Q350 -240 280 -240Q298 -268 338 -268Q353 -268 368.5 -263.5Q384 -259 401.0 -248.0Q418 -237 428.5 -213.5Q439 -190 439 -157Q439 -136 411 -6Q389 -12 356 -12Q259 -12 189.5 60.0Q120 132 120 232Q120 267 131.5 303.0Q143 339 157.5 366.5Q172 394 200.5 428.5Q229 463 248.5 483.5Q268 504 303 539Q280 621 280 689Q280 779 313.0 839.5Q346 900 379 900Q389 900 401.5 887.0Q414 874 426.0 851.0Q438 828 446.5 790.5Q455 753 455 710Q455 551 342 447L368 329Q384 332 397 332Q458 332 500.0 282.5Q542 233 542 162Q542 44 434 2ZM426 746Q426 801 394 801Q358 801 333.0 748.0Q308 695 308 630Q308 588 321 557Q359 580 392.5 639.5Q426 699 426 746ZM498 128Q498 183 466.0 216.0Q434 249 383 249L428 23Q498 52 498 128ZM407 17 361 247Q334 241 311.5 214.0Q289 187 289 158Q289 143 295.0 128.5Q301 114 309.5 104.0Q318 94 327.0 86.0Q336 78 342.0 74.5Q348 71 348 71L340 66Q307 75 277.5 106.0Q248 137 248 184Q248 231 277.5 270.5Q307 310 343 323L325 430Q168 299 168 177Q168 104 223.0 55.0Q278 6 348 6Q365 6 407 17Z" fill="#000"/><rect x="1511.5" y="610.92" width="27" height="27" fill="none" stroke="#9d9d9d" stroke-width="1.6" stroke-dasharray="3.3 3.05"/><path d="M1533 617.72 V627.12 H1523.5" stroke="#a0a0a0" stroke-width="2.8" fill="none"/><path d="M1516 627.12 L1524.6 621.52 V632.72 Z" fill="#a0a0a0"/><rect x="465.3" y="852.39" width="1090.00" height="1.7" fill="#525252"/><rect x="465.3" y="863.11" width="1090.00" height="1.7" fill="#525252"/><rect x="465.3" y="873.83" width="1090.00" height="1.7" fill="#525252"/><rect x="465.3" y="884.55" width="1090.00" height="1.7" fill="#525252"/><rect x="465.3" y="895.27" width="1090.00" height="1.7" fill="#525252"/><rect x="766.90" y="852.49" width="1.8" height="44.38" fill="#000"/><rect x="1029.20" y="852.49" width="1.8" height="44.38" fill="#000"/><rect x="1291.40" y="852.49" width="1.8" height="44.38" fill="#000"/><rect x="1553.50" y="852.49" width="1.8" height="44.38" fill="#000"/><rect x="627.25" y="863.96" width="13.3" height="5.7" fill="#000"/><rect x="891.95" y="863.96" width="13.3" height="5.7" fill="#000"/><rect x="1154.15" y="863.96" width="13.3" height="5.7" fill="#000"/><rect x="1416.45" y="863.96" width="13.3" height="5.7" fill="#000"/><path transform="translate(466.59 894.69) scale(0.06339 -0.06339)" d="M434 2Q464 -103 464 -170Q464 -223 427.0 -257.0Q390 -291 337 -291Q287 -291 250.0 -261.5Q213 -232 213 -190Q213 -160 233.5 -133.5Q254 -107 283.5 -107.0Q313 -107 331.5 -128.5Q350 -150 350 -178Q350 -240 280 -240Q298 -268 338 -268Q353 -268 368.5 -263.5Q384 -259 401.0 -248.0Q418 -237 428.5 -213.5Q439 -190 439 -157Q439 -136 411 -6Q389 -12 356 -12Q259 -12 189.5 60.0Q120 132 120 232Q120 267 131.5 303.0Q143 339 157.5 366.5Q172 394 200.5 428.5Q229 463 248.5 483.5Q268 504 303 539Q280 621 280 689Q280 779 313.0 839.5Q346 900 379 900Q389 900 401.5 887.0Q414 874 426.0 851.0Q438 828 446.5 790.5Q455 753 455 710Q455 551 342 447L368 329Q384 332 397 332Q458 332 500.0 282.5Q542 233 542 162Q542 44 434 2ZM426 746Q426 801 394 801Q358 801 333.0 748.0Q308 695 308 630Q308 588 321 557Q359 580 392.5 639.5Q426 699 426 746ZM498 128Q498 183 466.0 216.0Q434 249 383 249L428 23Q498 52 498 128ZM407 17 361 247Q334 241 311.5 214.0Q289 187 289 158Q289 143 295.0 128.5Q301 114 309.5 104.0Q318 94 327.0 86.0Q336 78 342.0 74.5Q348 71 348 71L340 66Q307 75 277.5 106.0Q248 137 248 184Q248 231 277.5 270.5Q307 310 343 323L325 430Q168 299 168 177Q168 104 223.0 55.0Q278 6 348 6Q365 6 407 17Z" fill="#000"/><rect x="1511.5" y="798.64" width="27" height="27" fill="none" stroke="#9d9d9d" stroke-width="1.6" stroke-dasharray="3.3 3.05"/><path d="M1533 805.44 V814.84 H1523.5" stroke="#a0a0a0" stroke-width="2.8" fill="none"/><path d="M1516 814.84 L1524.6 809.24 V820.44 Z" fill="#a0a0a0"/><rect x="465.3" y="1040.11" width="1090.00" height="1.7" fill="#525252"/><rect x="465.3" y="1050.83" width="1090.00" height="1.7" fill="#525252"/><rect x="465.3" y="1061.55" width="1090.00" height="1.7" fill="#525252"/><rect x="465.3" y="1072.27" width="1090.00" height="1.7" fill="#525252"/><rect x="465.3" y="1082.99" width="1090.00" height="1.7" fill="#525252"/><rect x="766.90" y="1040.21" width="1.8" height="44.38" fill="#000"/><rect x="1029.20" y="1040.21" width="1.8" height="44.38" fill="#000"/><rect x="1291.40" y="1040.21" width="1.8" height="44.38" fill="#000"/><rect x="1553.50" y="1040.21" width="1.8" height="44.38" fill="#000"/><rect x="627.25" y="1051.68" width="13.3" height="5.7" fill="#000"/><rect x="891.95" y="1051.68" width="13.3" height="5.7" fill="#000"/><rect x="1154.15" y="1051.68" width="13.3" height="5.7" fill="#000"/><rect x="1416.45" y="1051.68" width="13.3" height="5.7" fill="#000"/><path transform="translate(466.59 1082.41) scale(0.06339 -0.06339)" d="M434 2Q464 -103 464 -170Q464 -223 427.0 -257.0Q390 -291 337 -291Q287 -291 250.0 -261.5Q213 -232 213 -190Q213 -160 233.5 -133.5Q254 -107 283.5 -107.0Q313 -107 331.5 -128.5Q350 -150 350 -178Q350 -240 280 -240Q298 -268 338 -268Q353 -268 368.5 -263.5Q384 -259 401.0 -248.0Q418 -237 428.5 -213.5Q439 -190 439 -157Q439 -136 411 -6Q389 -12 356 -12Q259 -12 189.5 60.0Q120 132 120 232Q120 267 131.5 303.0Q143 339 157.5 366.5Q172 394 200.5 428.5Q229 463 248.5 483.5Q268 504 303 539Q280 621 280 689Q280 779 313.0 839.5Q346 900 379 900Q389 900 401.5 887.0Q414 874 426.0 851.0Q438 828 446.5 790.5Q455 753 455 710Q455 551 342 447L368 329Q384 332 397 332Q458 332 500.0 282.5Q542 233 542 162Q542 44 434 2ZM426 746Q426 801 394 801Q358 801 333.0 748.0Q308 695 308 630Q308 588 321 557Q359 580 392.5 639.5Q426 699 426 746ZM498 128Q498 183 466.0 216.0Q434 249 383 249L428 23Q498 52 498 128ZM407 17 361 247Q334 241 311.5 214.0Q289 187 289 158Q289 143 295.0 128.5Q301 114 309.5 104.0Q318 94 327.0 86.0Q336 78 342.0 74.5Q348 71 348 71L340 66Q307 75 277.5 106.0Q248 137 248 184Q248 231 277.5 270.5Q307 310 343 323L325 430Q168 299 168 177Q168 104 223.0 55.0Q278 6 348 6Q365 6 407 17Z" fill="#000"/><rect x="1511.5" y="986.36" width="27" height="27" fill="none" stroke="#9d9d9d" stroke-width="1.6" stroke-dasharray="3.3 3.05"/><path d="M1533 993.16 V1002.56 H1523.5" stroke="#a0a0a0" stroke-width="2.8" fill="none"/><path d="M1516 1002.56 L1524.6 996.96 V1008.16 Z" fill="#a0a0a0"/></svg>
<div class="t" style="left:958.6px;top:286.28px;font-family:'DejaVu Serif',serif;font-size:46px;line-height:58px;color:#000;transform-origin:0 0;transform:scale(0.9876,1);">Title</div>
<div class="t" style="left:1457.4px;top:377.93px;font-family:'DejaVu Serif',serif;font-size:21px;line-height:26px;color:#000;transform-origin:0 0;transform:scale(0.9013,1);">Composer</div>
<div class="t" style="left:563.9px;top:470.59px;font-family:'DejaVu Sans',sans-serif;font-size:29.5px;line-height:37px;color:#000;transform-origin:0 0;transform:scale(0.93,1);font-weight:bold;">4</div>
<div class="t" style="left:563.9px;top:492.09px;font-family:'DejaVu Sans',sans-serif;font-size:29.5px;line-height:37px;color:#000;transform-origin:0 0;transform:scale(0.93,1);font-weight:bold;">4</div>
<div class="t" style="left:464.6px;top:628.98px;font-family:'DejaVu Serif',serif;font-size:16px;line-height:20px;color:#3a3a3a;font-style:italic;">5</div>
<div class="t" style="left:464.6px;top:816.70px;font-family:'DejaVu Serif',serif;font-size:16px;line-height:20px;color:#3a3a3a;font-style:italic;">9</div>
<div class="t" style="left:464.6px;top:1004.42px;font-family:'DejaVu Serif',serif;font-size:16px;line-height:20px;color:#3a3a3a;font-style:italic;">13</div>
<div style="left:0px;top:1076px;width:1920px;height:4px;background:#e3e3e3"></div>
</div></body></html>
